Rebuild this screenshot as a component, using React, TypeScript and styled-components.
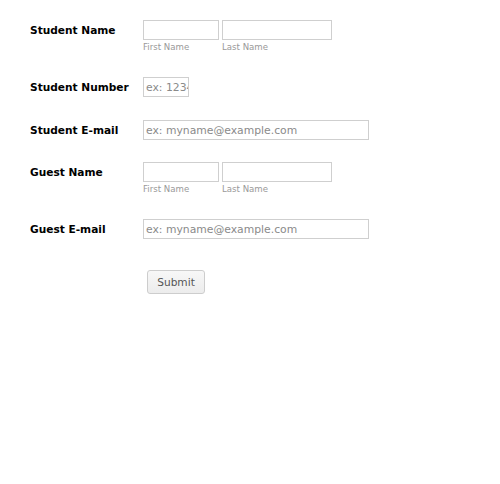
import React from "react";
import styled, { createGlobalStyle } from "styled-components";

const GlobalStyle = createGlobalStyle`
  body {
    margin: 0;
    background: #fff;
    font-family: "DejaVu Sans", Verdana, sans-serif;
  }
`;

const Form = styled.form`
  padding: 20px 0 0 30px;
  width: 440px;
`;

const Row = styled.div<{ $gap?: number }>`
  display: grid;
  grid-template-columns: 113px 1fr;
  align-items: start;
  margin-bottom: ${(p) => p.$gap ?? 22}px;
`;

const Label = styled.label`
  font-size: 10.6px;
  font-weight: bold;
  color: #000;
  line-height: 20px;
`;

const Fields = styled.div`
  display: flex;
  gap: 3px;
`;

const Field = styled.div`
  display: flex;
  flex-direction: column;
`;

const Input = styled.input<{ $w: number }>`
  box-sizing: border-box;
  width: ${(p) => p.$w}px;
  height: 20px;
  border: 1px solid #cfcfcf;
  padding: 0 0 0 2px;
  margin: 0;
  font-family: "DejaVu Sans", Verdana, sans-serif;
  font-size: 10.8px;
  color: #333;
  background: #fff;
  outline: none;
  &::placeholder {
    color: #8a8a8a;
  }
`;

const SubLabel = styled.span`
  font-size: 8.6px;
  color: #999;
  line-height: 15px;
`;

const SubmitRow = styled.div`
  padding: 9px 0 0 117px;
`;

const SubmitButton = styled.button`
  box-sizing: border-box;
  width: 58px;
  height: 24px;
  border: 1px solid #cdcdcd;
  border-radius: 3px;
  background: linear-gradient(#f7f7f7, #ececec);
  color: #555;
  font-family: "DejaVu Sans", Verdana, sans-serif;
  font-size: 10.6px;
  padding: 0;
`;

const NameFields = () => (
  <Fields>
    <Field>
      <Input $w={76} />
      <SubLabel>First Name</SubLabel>
    </Field>
    <Field>
      <Input $w={110} />
      <SubLabel>Last Name</SubLabel>
    </Field>
  </Fields>
);

export default function App() {
  return (
    <>
      <GlobalStyle />
      <Form onSubmit={(e) => e.preventDefault()}>
        <Row>
          <Label>Student Name</Label>
          <NameFields />
        </Row>
        <Row $gap={23}>
          <Label>Student Number</Label>
          <Input $w={46} placeholder="ex: 12345" />
        </Row>
        <Row>
          <Label>Student E-mail</Label>
          <Input $w={226} placeholder="ex: myname@example.com" />
        </Row>
        <Row>
          <Label>Guest Name</Label>
          <NameFields />
        </Row>
        <Row>
          <Label>Guest E-mail</Label>
          <Input $w={226} placeholder="ex: myname@example.com" />
        </Row>
        <SubmitRow>
          <SubmitButton type="submit">Submit</SubmitButton>
        </SubmitRow>
      </Form>
    </>
  );
}
